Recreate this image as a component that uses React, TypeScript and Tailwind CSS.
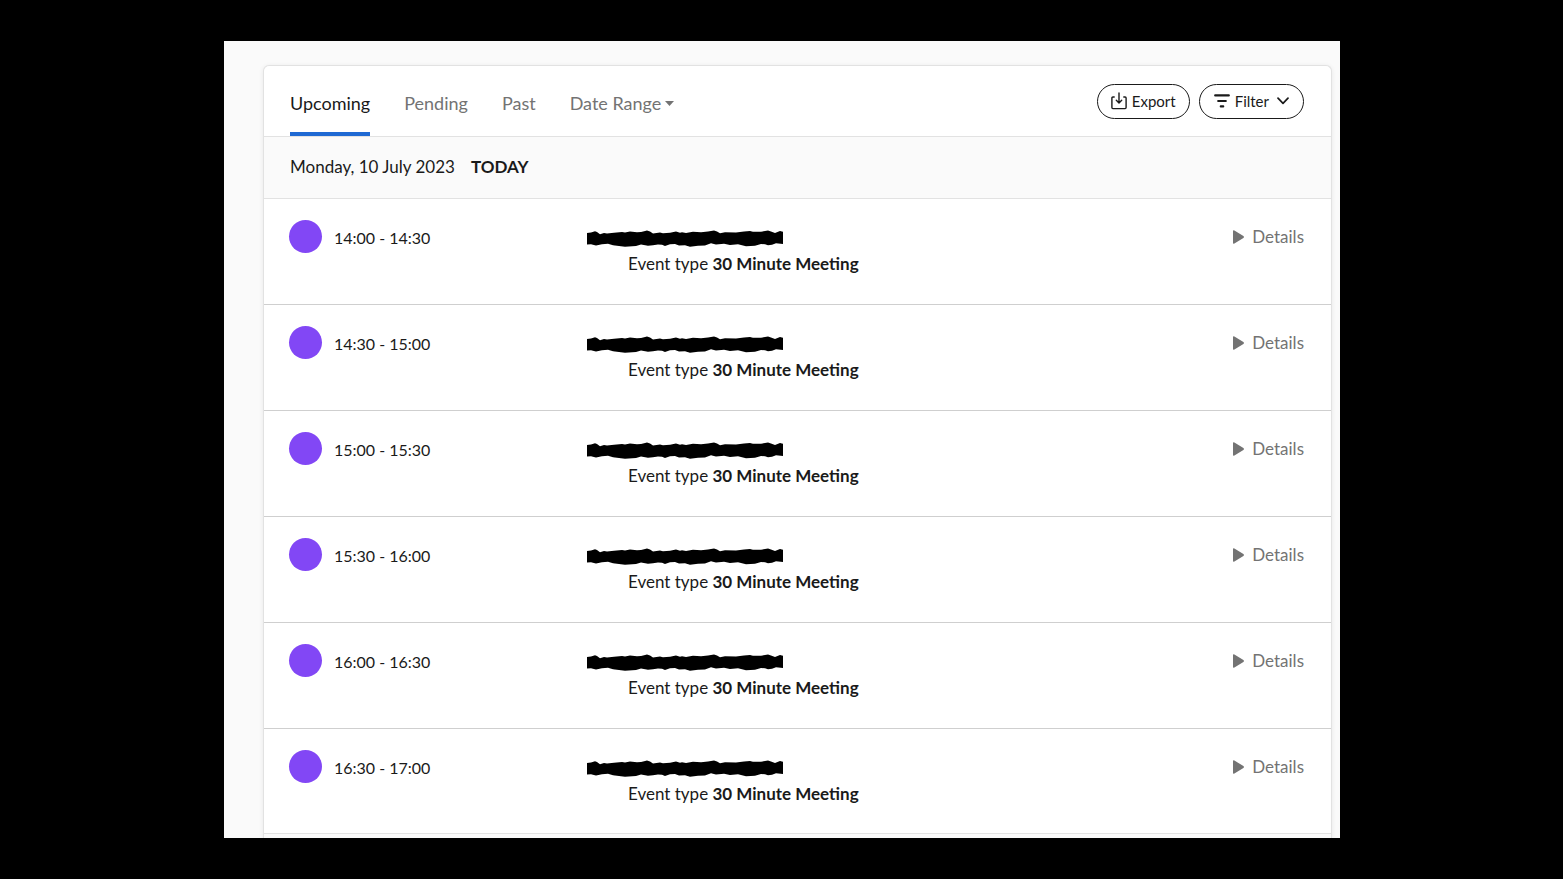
type Meeting = {
  time: string;
  type: string;
};

const tabs = ['Upcoming', 'Pending', 'Past'];

const meetings: Meeting[] = [
  { time: '14:00 - 14:30', type: '30 Minute Meeting' },
  { time: '14:30 - 15:00', type: '30 Minute Meeting' },
  { time: '15:00 - 15:30', type: '30 Minute Meeting' },
  { time: '15:30 - 16:00', type: '30 Minute Meeting' },
  { time: '16:00 - 16:30', type: '30 Minute Meeting' },
  { time: '16:30 - 17:00', type: '30 Minute Meeting' },
];

function ExportIcon() {
  return (
    <svg width="16" height="18" viewBox="0 0 16 18" fill="none" stroke="currentColor" strokeWidth="1.4" strokeLinecap="round" strokeLinejoin="round" aria-hidden="true">
      <path d="M3.2 5H1.9Q.9 5 .9 6v9.6q0 1 1 1h12.2q1 0 1-1V6q0-1-1-1h-1.3" />
      <path d="M8 .9v10M5.3 8.3 8 11l2.7-2.7" />
    </svg>
  );
}

function FilterIcon() {
  return (
    <svg width="16" height="14" viewBox="0 0 16 14" fill="none" stroke="currentColor" strokeWidth="2.2" strokeLinecap="round" aria-hidden="true">
      <path d="M1.2 1.4h13.6M4.200 7h7.600M6.800 12.400h2.400" />
    </svg>
  );
}

function ChevronIcon() {
  return (
    <svg width="12" height="8" viewBox="0 0 12 8" fill="none" stroke="currentColor" strokeWidth="1.7" strokeLinecap="round" strokeLinejoin="round" aria-hidden="true">
      <path d="M1 1.2l5 5.2 5-5.2" />
    </svg>
  );
}

// Marker stroke over the invitee's name
function HiddenName() {
  return (
    <svg width="196" height="18" viewBox="0 0 196 18" fill="#000" role="img" aria-label="Hidden name">
      <path d="M0 3 4 2.500 8 1.300 10 2 13 4.300 17 3 20 3.500 27 2.700 35 2 38 2.500 43 1.500 50 2.300 54 2 60 .6 63 1.500 66 3.500 73 2.500 76 3.300 83 2.800 89 1.500 93 2.800 95 2.200 99 3 106 1.800 114 2.200 121 1.600 127 .5 130 1.500 133 3.200 138 2.300 149 2.500 157 1.500 163 1 166 1.800 174 1.800 181 .4 184 1.500 188 3 193 1 196 1.800V14L189 13.300 185 14.700 181 15.300 178 14.300 174 14 168 15.700 159 16.300 151 14.200 143 15 137 13.700 129 14.500 124 13.300 118 15.500 111 15.700 103 16.700 98 15.200 92 15.500 88 14 83 14.200 78 16 75 14.700 71 14.500 66 15.200 61 15.700 54 14.500 49 16 38 16.700 32 16 26 15.200 21 13.800 15 14.300 9 15.600 4 14.200 0 14.400Z" />
    </svg>
  );
}

function MeetingRow({ meeting }: { meeting: Meeting }) {
  return (
    <li className="flex h-[106px] items-start border-b border-[#cfcfcf] pt-[21px] pr-[27px] pl-[25px] last:h-[105px] last:border-[#e2e2e2]">
      <div className="flex w-[298px] shrink-0 items-center gap-3">
        <span className="size-[33px] rounded-full bg-[#8247f5]" />
        <span className="pt-0.5 text-base">{meeting.time}</span>
      </div>
      <div className="flex-1 pt-2.5">
        <HiddenName />
        <p className="mt-1.5 pl-[41px] leading-5">
          Event type <strong className="font-bold">{meeting.type}</strong>
        </p>
      </div>
      <button type="button" className="flex h-[33px] items-center gap-2 text-[#737373]">
        <svg width="11" height="14" viewBox="0 0 11 14" fill="currentColor" aria-hidden="true">
          <path d="M0 1.2Q0-.4 1.4.5l9 5.6q1.100.9 0 1.800l-9 5.600Q0 14.400 0 12.800Z" />
        </svg>
        Details
      </button>
    </li>
  );
}

export default function App() {
  return (
    <div className="min-h-screen bg-black pt-[41px] pr-[223px] pb-[41px] pl-56 font-[Lato,sans-serif] text-[17px] text-[#1a1a1a]">
      <main className="overflow-hidden bg-[#fafafa] pt-6 pr-2 pl-[39px]">
        <section className="rounded-t-md border border-b-0 border-[#e2e2e2] bg-[#fafafa] pb-1 shadow-[0_1px_5px_rgba(0,0,0,0.08)]">
          <header className="flex h-[71px] justify-between rounded-t-md border-b border-[#e2e2e2] bg-white pr-[27px] pl-[26px]">
            <nav className="flex gap-[34px] text-lg">
              {tabs.map(tab => (
                <button
                  key={tab}
                  type="button"
                  className={
                    tab === 'Upcoming'
                      ? 'border-b-4 border-[#1f69d3] pt-2'
                      : 'border-b-4 border-transparent pt-2 text-[#737373]'
                  }>
                  {tab}
                </button>
              ))}
              <button type="button" className="flex items-center gap-1 border-b-4 border-transparent pt-2 text-[#737373]">
                Date Range
                <svg width="9" height="5" viewBox="0 0 9 5" fill="currentColor" aria-hidden="true">
                  <path d="M0 0h9L4.500 5Z" />
                </svg>
              </button>
            </nav>
            <div className="flex items-center gap-[9px] text-[15px]">
              <button type="button" className="flex h-[35px] items-center gap-[5px] rounded-full border border-[#1a1a1a] px-[13px]">
                <ExportIcon />
                Export
              </button>
              <button type="button" className="flex h-[35px] items-center gap-[5px] rounded-full border border-[#1a1a1a] px-[14px]">
                <FilterIcon />
                <span className="mr-[3px]">Filter</span>
                <ChevronIcon />
              </button>
            </div>
          </header>
          <h2 className="flex h-[62px] items-center gap-4 border-b border-[#e2e2e2] px-[26px] pb-0.5">
            <span>Monday, 10 July 2023</span>
            <strong className="font-bold">TODAY</strong>
          </h2>
          <ul className="bg-white">
            {meetings.map(meeting => (
              <MeetingRow key={meeting.time} meeting={meeting} />
            ))}
          </ul>
        </section>
      </main>
    </div>
  );
}
